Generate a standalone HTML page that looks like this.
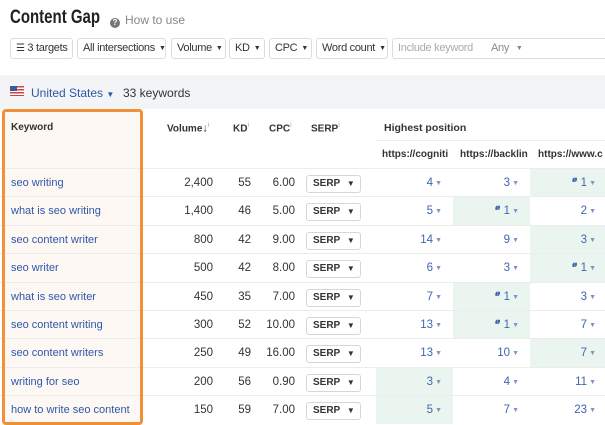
<!DOCTYPE html><html><head><style>
*{margin:0;padding:0;box-sizing:border-box}
body{width:605px;height:425px;overflow:hidden;background:#fff;font-family:"Liberation Sans",sans-serif;position:relative;color:#333}
.a{position:absolute;white-space:nowrap}
.btn{position:absolute;top:38px;height:21px;border:1px solid #dcdcdc;border-radius:3px;font-size:11px;letter-spacing:-0.3px;line-height:19px;padding-left:5px;color:#333;background:#fff;white-space:nowrap;overflow:hidden}
.tri{font-size:7px;margin-left:4px;vertical-align:1px}
.row{position:absolute;left:0;width:605px;height:28.4px;border-top:1px solid #ececec;font-size:11.5px}
.row div{position:absolute;top:0;line-height:28px;white-space:nowrap}
.kw{left:11px;color:#2f57a8;font-size:11px}
.n{text-align:right}
.serp{left:306px;top:6px!important;height:18px;width:55px;border:1px solid #d6d6d6;border-radius:3px;line-height:16px!important;font-size:10px;font-weight:bold;padding-left:6px;color:#333}
.p{color:#3f66b0;text-align:right;width:77px;padding-right:11px;height:28px}
.p i{font-style:normal;font-size:7px;color:#7a95c8;margin-left:2px;vertical-align:1px}
.g{background:#eaf5ef}
.q{font-size:11px;font-weight:bold;margin-right:4px;letter-spacing:-1px}
.h{font-size:10px;font-weight:bold;top:122px}
.h sup{font-weight:normal;color:#aaa;font-size:7px}
</style></head><body>
<div class="a" style="left:10px;top:7px;font-size:19px;font-weight:bold;color:#222;transform:scaleX(0.79);transform-origin:0 0">Content Gap</div>
<div class="a" style="left:110px;top:13px;font-size:12px;color:#888"><span style="display:inline-block;width:10px;height:10px;border-radius:50%;background:#777;color:#fff;font-size:8px;text-align:center;line-height:10px;font-weight:bold;vertical-align:-1px;margin-right:5px">?</span>How to use</div>
<div class="btn" style="left:10px;width:63px"><span style="font-size:10px">☰</span> 3 targets</div>
<div class="btn" style="left:77px;width:89px">All intersections<span class="tri">▼</span></div>
<div class="btn" style="left:171px;width:55px">Volume<span class="tri">▼</span></div>
<div class="btn" style="left:229px;width:36px">KD<span class="tri">▼</span></div>
<div class="btn" style="left:269px;width:43px">CPC<span class="tri">▼</span></div>
<div class="btn" style="left:316px;width:72px">Word count<span class="tri">▼</span></div>
<div class="btn" style="left:392px;width:220px;color:#aaa">Include keyword<span style="position:absolute;left:98px;color:#888">Any <span class="tri">▼</span></span></div>
<div class="a" style="left:0;top:75px;width:605px;height:34px;background:#f3f4f6"></div>
<div class="a" style="left:10px;top:86px;width:14px;height:10px;background:repeating-linear-gradient(#c44 0 1.5px,#fff 1.5px 3px)"><div style="width:7px;height:5px;background:#3c5a9a"></div></div>
<div class="a" style="left:31px;top:86px;font-size:12px;color:#2f57a8">United States <span style="font-size:8px">▼</span></div>
<div class="a" style="left:123px;top:86px;font-size:12px;color:#333">33 keywords</div>
<div class="a" style="left:2px;top:109px;width:140px;height:316px;background:#fdf8f4"></div>
<div class="a h" style="left:11px">Keyword</div>
<div class="a h" style="left:167px">Volume<span style="font-size:11px">↓</span><sup>i</sup></div>
<div class="a h" style="left:233px">KD<sup>i</sup></div>
<div class="a h" style="left:269px">CPC<sup>i</sup></div>
<div class="a h" style="left:311px">SERP<sup>i</sup></div>
<div class="a h" style="left:384px;font-size:10.5px">Highest position</div>
<div class="a" style="left:376px;top:140px;width:229px;border-top:1px solid #ececec"></div>
<div class="a" style="left:382px;top:149px;font-size:10px;font-weight:bold;width:71px;overflow:hidden">https://cogniti</div>
<div class="a" style="left:460px;top:149px;font-size:10px;font-weight:bold;width:70px;overflow:hidden">https://backlin</div>
<div class="a" style="left:538px;top:149px;font-size:10px;font-weight:bold;width:67px;overflow:hidden">https://www.c</div>
<div id="rows"></div>
<div class="a" style="left:2px;top:109px;width:141px;height:316px;border:3px solid #f0913a;border-radius:4px"></div>
<script>
var d=[["seo writing","2,400",55,"6.00",[4,3,1],2],["what is seo writing","1,400",46,"5.00",[5,1,2],1],["seo content writer","800",42,"9.00",[14,9,3],2],["seo writer","500",42,"8.00",[6,3,1],2],["what is seo writer","450",35,"7.00",[7,1,3],1],["seo content writing","300",52,"10.00",[13,1,7],1],["seo content writers","250",49,"16.00",[13,10,7],2],["writing for seo","200",56,"0.90",[3,4,11],0],["how to write seo content","150",59,"7.00",[5,7,23],0]];
var h="";d.forEach(function(r,i){h+='<div class="row" style="top:'+(168+i*28.4)+'px"><div class="kw">'+r[0]+'</div><div class="n" style="right:392px">'+r[1]+'</div><div class="n" style="right:354px">'+r[2]+'</div><div class="n" style="right:310px">'+r[3]+'</div><div class="serp">SERP <span style="font-size:8px;margin-left:4px">▼</span></div>';
[376,453,530].forEach(function(x,j){var v=r[4][j];var q=(v==1&&j==r[5])?'<span class="q">❛❜</span>':'';h+='<div class="p'+(j==r[5]?' g':'')+'" style="left:'+x+'px">'+q+v+'<i>▼</i></div>';});h+='</div>';});
document.getElementById('rows').innerHTML=h;
</script>
</body></html>
